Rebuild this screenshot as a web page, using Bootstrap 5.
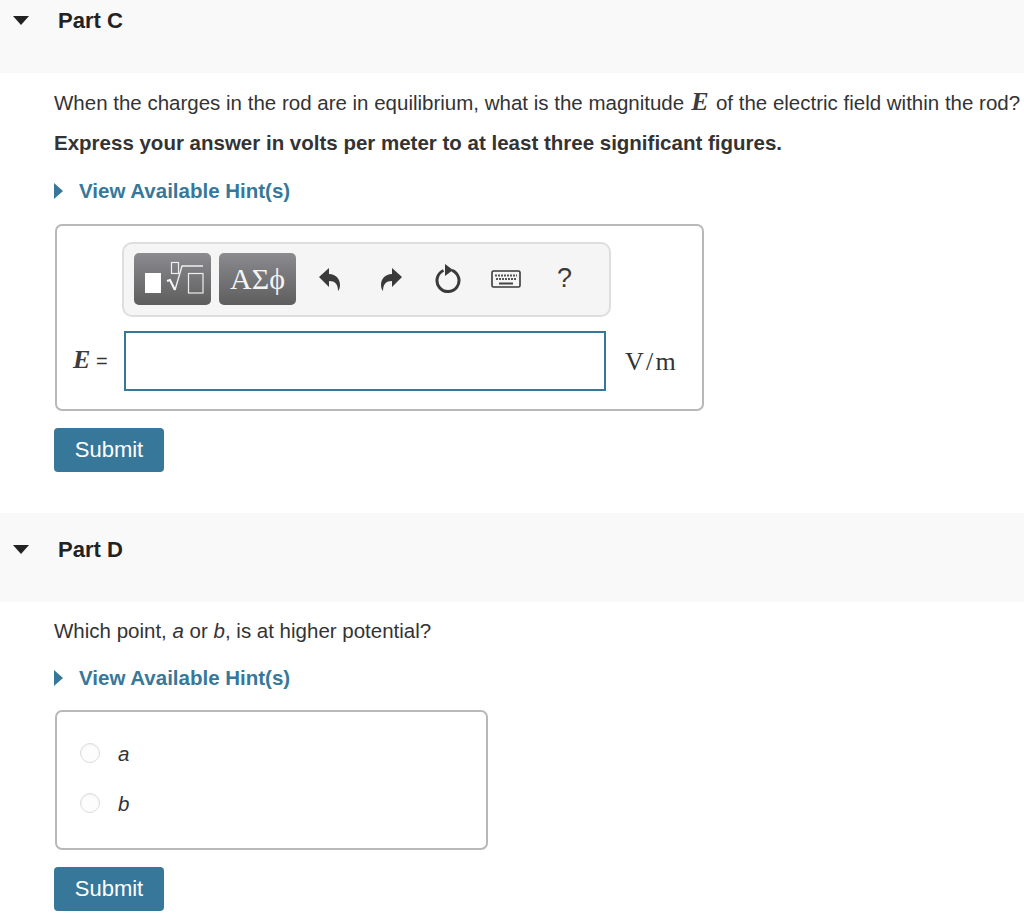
<!doctype html>
<html lang="en">
<head>
<meta charset="utf-8">
<title>Part C and Part D</title>
<link href="https://cdn.jsdelivr.net/npm/bootstrap@5.3.0/dist/css/bootstrap.min.css" rel="stylesheet">
<style>
body{font-family:"Liberation Sans",Arial,sans-serif;color:#333;background:#fff;margin:0;font-size:20.5px;line-height:24px;overflow:hidden}
.part-head{background:#f9f9f9;display:flex;align-items:flex-start;color:#222;font-weight:700;font-size:22px;line-height:26px}
.head-c{height:73px;padding-top:8px}
.head-d{height:89px;padding-top:24px;margin-top:41px}
.part-title{font:inherit;margin:0}
.caret-down{width:0;height:0;border-left:8px solid transparent;border-right:8px solid transparent;border-top:9px solid #222;margin:8px 29px 0 13px;flex:none}
.part-body{padding-left:54px}
.prompt{margin:0;white-space:nowrap}
.prompt.first-c{padding-top:18px}
.prompt.strong-line{font-weight:700;margin-top:16px}
.first-d{padding-top:17px}
.math-e{font-family:"Liberation Serif",serif;font-weight:700;font-style:italic;font-size:26px;line-height:0;margin:0 1.500px;color:#3c3c3c}
.hint{display:flex;align-items:center;color:#37789a;font-weight:700;font-size:20.5px;line-height:24px}
.hint-c{margin-top:24px}
.hint-d{margin-top:23px}
.caret-right{width:0;height:0;border-top:8px solid transparent;border-bottom:8px solid transparent;border-left:9px solid #37789a;margin-right:16px}
.answer-box{border:2px solid #b8b8b8;border-radius:7px;background:#fff;margin-left:1px}
.box-c{width:649px;height:187px;margin-top:21px;padding:16px 0 0 65px}
.box-d{width:433px;height:140px;margin-top:20px;padding:17px 0 0 23px}
.tools{width:489px;height:75px;background:#f5f5f5;border:2px solid #dedede;border-radius:10px;display:flex;align-items:center;padding:0 0 2px 10px}
.sym-btn{width:77px;height:52px;border-radius:5px;background:linear-gradient(#8b8b90,#5e5e5e);color:#f4f4f4;display:flex;align-items:center;justify-content:center;margin-right:8px;font-family:"Liberation Serif",serif;font-size:30px;line-height:1;flex:none}
.tool-icon{flex:none;display:block}
.ti-undo{margin-left:14px}
.ti-redo{margin-left:37px}
.ti-reset{margin-left:31px;margin-top:-2px}
.ti-keys{margin-left:29px}
.qmark{font-size:27px;color:#3a3a3a;line-height:1;margin-left:36px}
.entry{display:flex;align-items:center;margin-top:14px;margin-left:-65px}
.var-label{width:67px;padding-left:16px;color:#333;font-size:20px;white-space:nowrap;flex:none}
.var-label .math-e{margin:0}
.entry-field{width:482px;height:60px;border:2px solid #37789a;background:#fff;flex:none;border-radius:0;padding:0 8px}
.unit{font-family:"Liberation Serif",serif;font-size:26px;letter-spacing:2.300px;margin-left:19px;color:#333;white-space:nowrap;padding-top:2px}
.submit-btn{display:block;background:#37789a;border:0;border-radius:4px;color:#fff;font-size:22px;line-height:26px;width:110px;height:44px;padding:0}
.submit-btn:hover{background:#37789a;color:#fff}
.sb-c,.sb-d{margin-top:17px}
.radio-row{display:flex;align-items:center;height:50px;font-style:italic}
.radio-dot{width:20px;height:20px;border:1px solid #dcdcdc;border-radius:50%;background:#fdfdfd;box-shadow:inset 0 1px 2px rgba(0,0,0,.06);margin:-3px 0 0;flex:none;appearance:none}
.radio-row span{margin-left:18px}
</style>
</head>
<body>
<section>
  <div class="part-head head-c"><span class="caret-down"></span><h2 class="part-title">Part C</h2></div>
  <div class="part-body">
    <p class="prompt first-c">When the charges in the rod are in equilibrium, what is the magnitude <span class="math-e">E</span> of the electric field within the rod?</p>
    <p class="prompt strong-line">Express your answer in volts per meter to at least three significant figures.</p>
    <div class="hint hint-c"><span class="caret-right"></span>View Available Hint(s)</div>
    <div class="answer-box box-c">
      <div class="tools">
        <div class="sym-btn">
          <svg width="77" height="52" viewBox="0 0 77 52" fill="none"><rect x="11" y="20" width="16" height="20" fill="#fff"/><rect x="37.500" y="9.500" width="7" height="11" stroke="#eee" stroke-width="1.200"/><path d="M33 28l3-1 5 10" stroke="#f4f4f4" stroke-width="2.200"/><path d="M41 37l7-24h21" stroke="#eee" stroke-width="1.400"/><rect x="54.500" y="20.500" width="14.500" height="19.500" stroke="#eee" stroke-width="1.200"/></svg>
        </div>
        <div class="sym-btn">ΑΣϕ</div>
        <svg class="tool-icon ti-undo" width="24" height="26" viewBox="0 0 24 26"><path d="M1 11 11 2v6c7 0 11 5 11 11 0 3-1 5-2 6 0-7-3-10-9-10v6z" fill="#3a3a3a"/></svg>
        <svg class="tool-icon ti-redo" width="24" height="26" viewBox="0 0 24 26"><path d="M23 11 13 2v6C6 8 2 13 2 19c0 3 1 5 2 6 0-7 3-10 9-10v6z" fill="#3a3a3a"/></svg>
        <svg class="tool-icon ti-reset" width="28" height="30" viewBox="0 0 28 30" fill="none"><path d="M9.500 7.500A11 11 0 1 0 18 7.300" stroke="#3a3a3a" stroke-width="3"/><path d="M11 1l8 6-8 6z" fill="#3a3a3a"/></svg>
        <svg class="tool-icon ti-keys" width="30" height="18" viewBox="0 0 30 18" fill="none"><rect x="1" y="1" width="28" height="16" rx="1.500" stroke="#3a3a3a" stroke-width="1.600"/><path d="M4 5.500h22M5 9h20" stroke="#555" stroke-width="2" stroke-dasharray="2 1"/><path d="M8 13.500h14" stroke="#444" stroke-width="2"/></svg>
        <span class="qmark">?</span>
      </div>
      <div class="entry">
        <div class="var-label"><span class="math-e">E</span> =</div>
        <input class="entry-field" type="text" aria-label="E">
        <div class="unit">V/m</div>
      </div>
    </div>
    <button type="button" class="btn submit-btn sb-c">Submit</button>
  </div>
</section>
<section>
  <div class="part-head head-d"><span class="caret-down"></span><h2 class="part-title">Part D</h2></div>
  <div class="part-body">
    <p class="prompt first-d">Which point, <i>a</i> or <i>b</i>, is at higher potential?</p>
    <div class="hint hint-d"><span class="caret-right"></span>View Available Hint(s)</div>
    <div class="answer-box box-d">
      <label class="radio-row"><input class="radio-dot" type="radio" name="pt"><span>a</span></label>
      <label class="radio-row"><input class="radio-dot" type="radio" name="pt"><span>b</span></label>
    </div>
    <button type="button" class="btn submit-btn sb-d">Submit</button>
  </div>
</section>
</body>
</html>
